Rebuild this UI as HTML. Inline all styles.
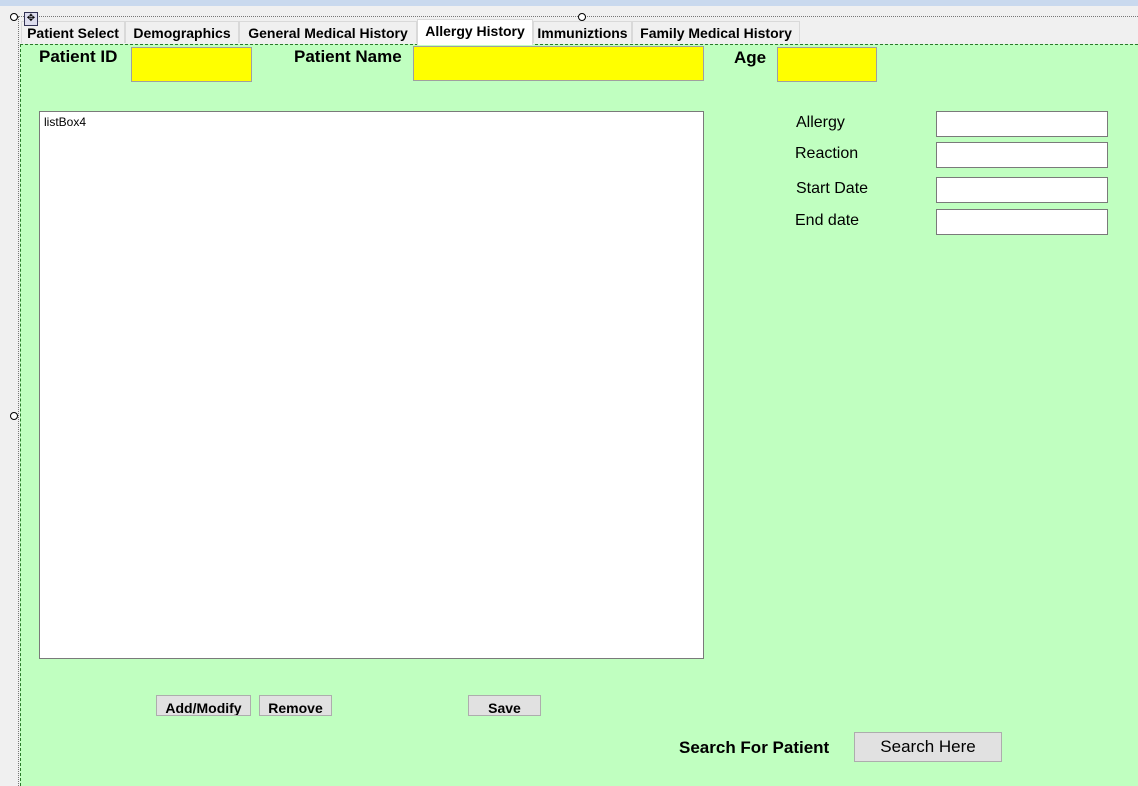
<!DOCTYPE html><html><head><style>
body{margin:0;width:1138px;height:786px;overflow:hidden;background:#f0f0f0;font-family:"Liberation Sans",Arial,sans-serif;position:relative}
.a{position:absolute}
.tab{position:absolute;top:21px;height:22px;border:1px solid #d9d9d9;border-bottom:none;background:#f0f0f0;font-weight:bold;font-size:14px;line-height:22px;text-align:center;color:#000;box-sizing:border-box}
.y{position:absolute;background:#ffff00;border:1px solid #a0a0a0;box-sizing:border-box}
.w{position:absolute;background:#fff;border:1px solid #7a7a7a;box-sizing:border-box}
.lb{position:absolute;font-size:16px}
.bl{position:absolute;font-size:17px;font-weight:bold}
.btn{position:absolute;background:#e1e1e1;border:1px solid #adadad;box-sizing:border-box;font-weight:bold;font-size:14px;text-align:center;line-height:24px;height:21px;overflow:hidden}
</style></head><body>
<div class="a" style="left:0;top:0;width:1138px;height:6px;background:#c9d9ee"></div>
<div class="a" style="left:18px;top:16px;width:1120px;border-top:1px dotted #777"></div>
<div class="a" style="left:18px;top:16px;height:770px;border-left:1px dotted #777"></div>
<div class="a" style="left:20px;top:44px;width:1118px;height:742px;background:#c0ffc0;border-top:1px dashed #2a7a2a;border-left:1px dashed #2a7a2a;box-sizing:border-box"></div>
<div class="tab" style="left:21px;width:104px">Patient Select</div>
<div class="tab" style="left:125px;width:114px">Demographics</div>
<div class="tab" style="left:239px;width:178px">General Medical History</div>
<div class="tab" style="left:417px;top:19px;height:26px;width:116px;background:#fff;line-height:22px">Allergy History</div>
<div class="tab" style="left:533px;width:99px">Immuniztions</div>
<div class="tab" style="left:632px;width:168px">Family Medical History</div>
<div class="a" style="left:24px;top:12px;width:12px;height:12px;border:1px solid #335;background:#dde;font-size:10px;line-height:12px;text-align:center">✥</div>
<div class="a" style="left:10px;top:13px;width:6px;height:6px;border:1px solid #000;border-radius:50%;background:#fff"></div>
<div class="a" style="left:578px;top:13px;width:6px;height:6px;border:1px solid #000;border-radius:50%;background:#fff"></div>
<div class="a" style="left:10px;top:412px;width:6px;height:6px;border:1px solid #000;border-radius:50%;background:#fff"></div>
<div class="bl" style="left:39px;top:47px">Patient ID</div>
<div class="y" style="left:131px;top:47px;width:121px;height:35px"></div>
<div class="bl" style="left:294px;top:47px">Patient Name</div>
<div class="y" style="left:413px;top:46px;width:291px;height:35px"></div>
<div class="bl" style="left:734px;top:48px">Age</div>
<div class="y" style="left:777px;top:47px;width:100px;height:35px"></div>
<div class="w" style="left:39px;top:111px;width:665px;height:548px;font-size:12px;padding:3px 4px">listBox4</div>
<div class="lb" style="left:796px;top:114px">Allergy</div>
<div class="lb" style="left:795px;top:145px">Reaction</div>
<div class="lb" style="left:796px;top:180px">Start Date</div>
<div class="lb" style="left:795px;top:212px">End date</div>
<div class="w" style="left:936px;top:111px;width:172px;height:26px"></div>
<div class="w" style="left:936px;top:142px;width:172px;height:26px"></div>
<div class="w" style="left:936px;top:177px;width:172px;height:26px"></div>
<div class="w" style="left:936px;top:209px;width:172px;height:26px"></div>
<div class="btn" style="left:156px;top:695px;width:95px">Add/Modify</div>
<div class="btn" style="left:259px;top:695px;width:73px">Remove</div>
<div class="btn" style="left:468px;top:695px;width:73px">Save</div>
<div class="a" style="left:679px;top:738px;font-size:17px;font-weight:bold">Search For Patient</div>
<div class="a" style="left:854px;top:732px;width:148px;height:30px;background:#e1e1e1;border:1px solid #adadad;box-sizing:border-box;font-size:17px;text-align:center;line-height:28px">Search Here</div>
</body></html>
